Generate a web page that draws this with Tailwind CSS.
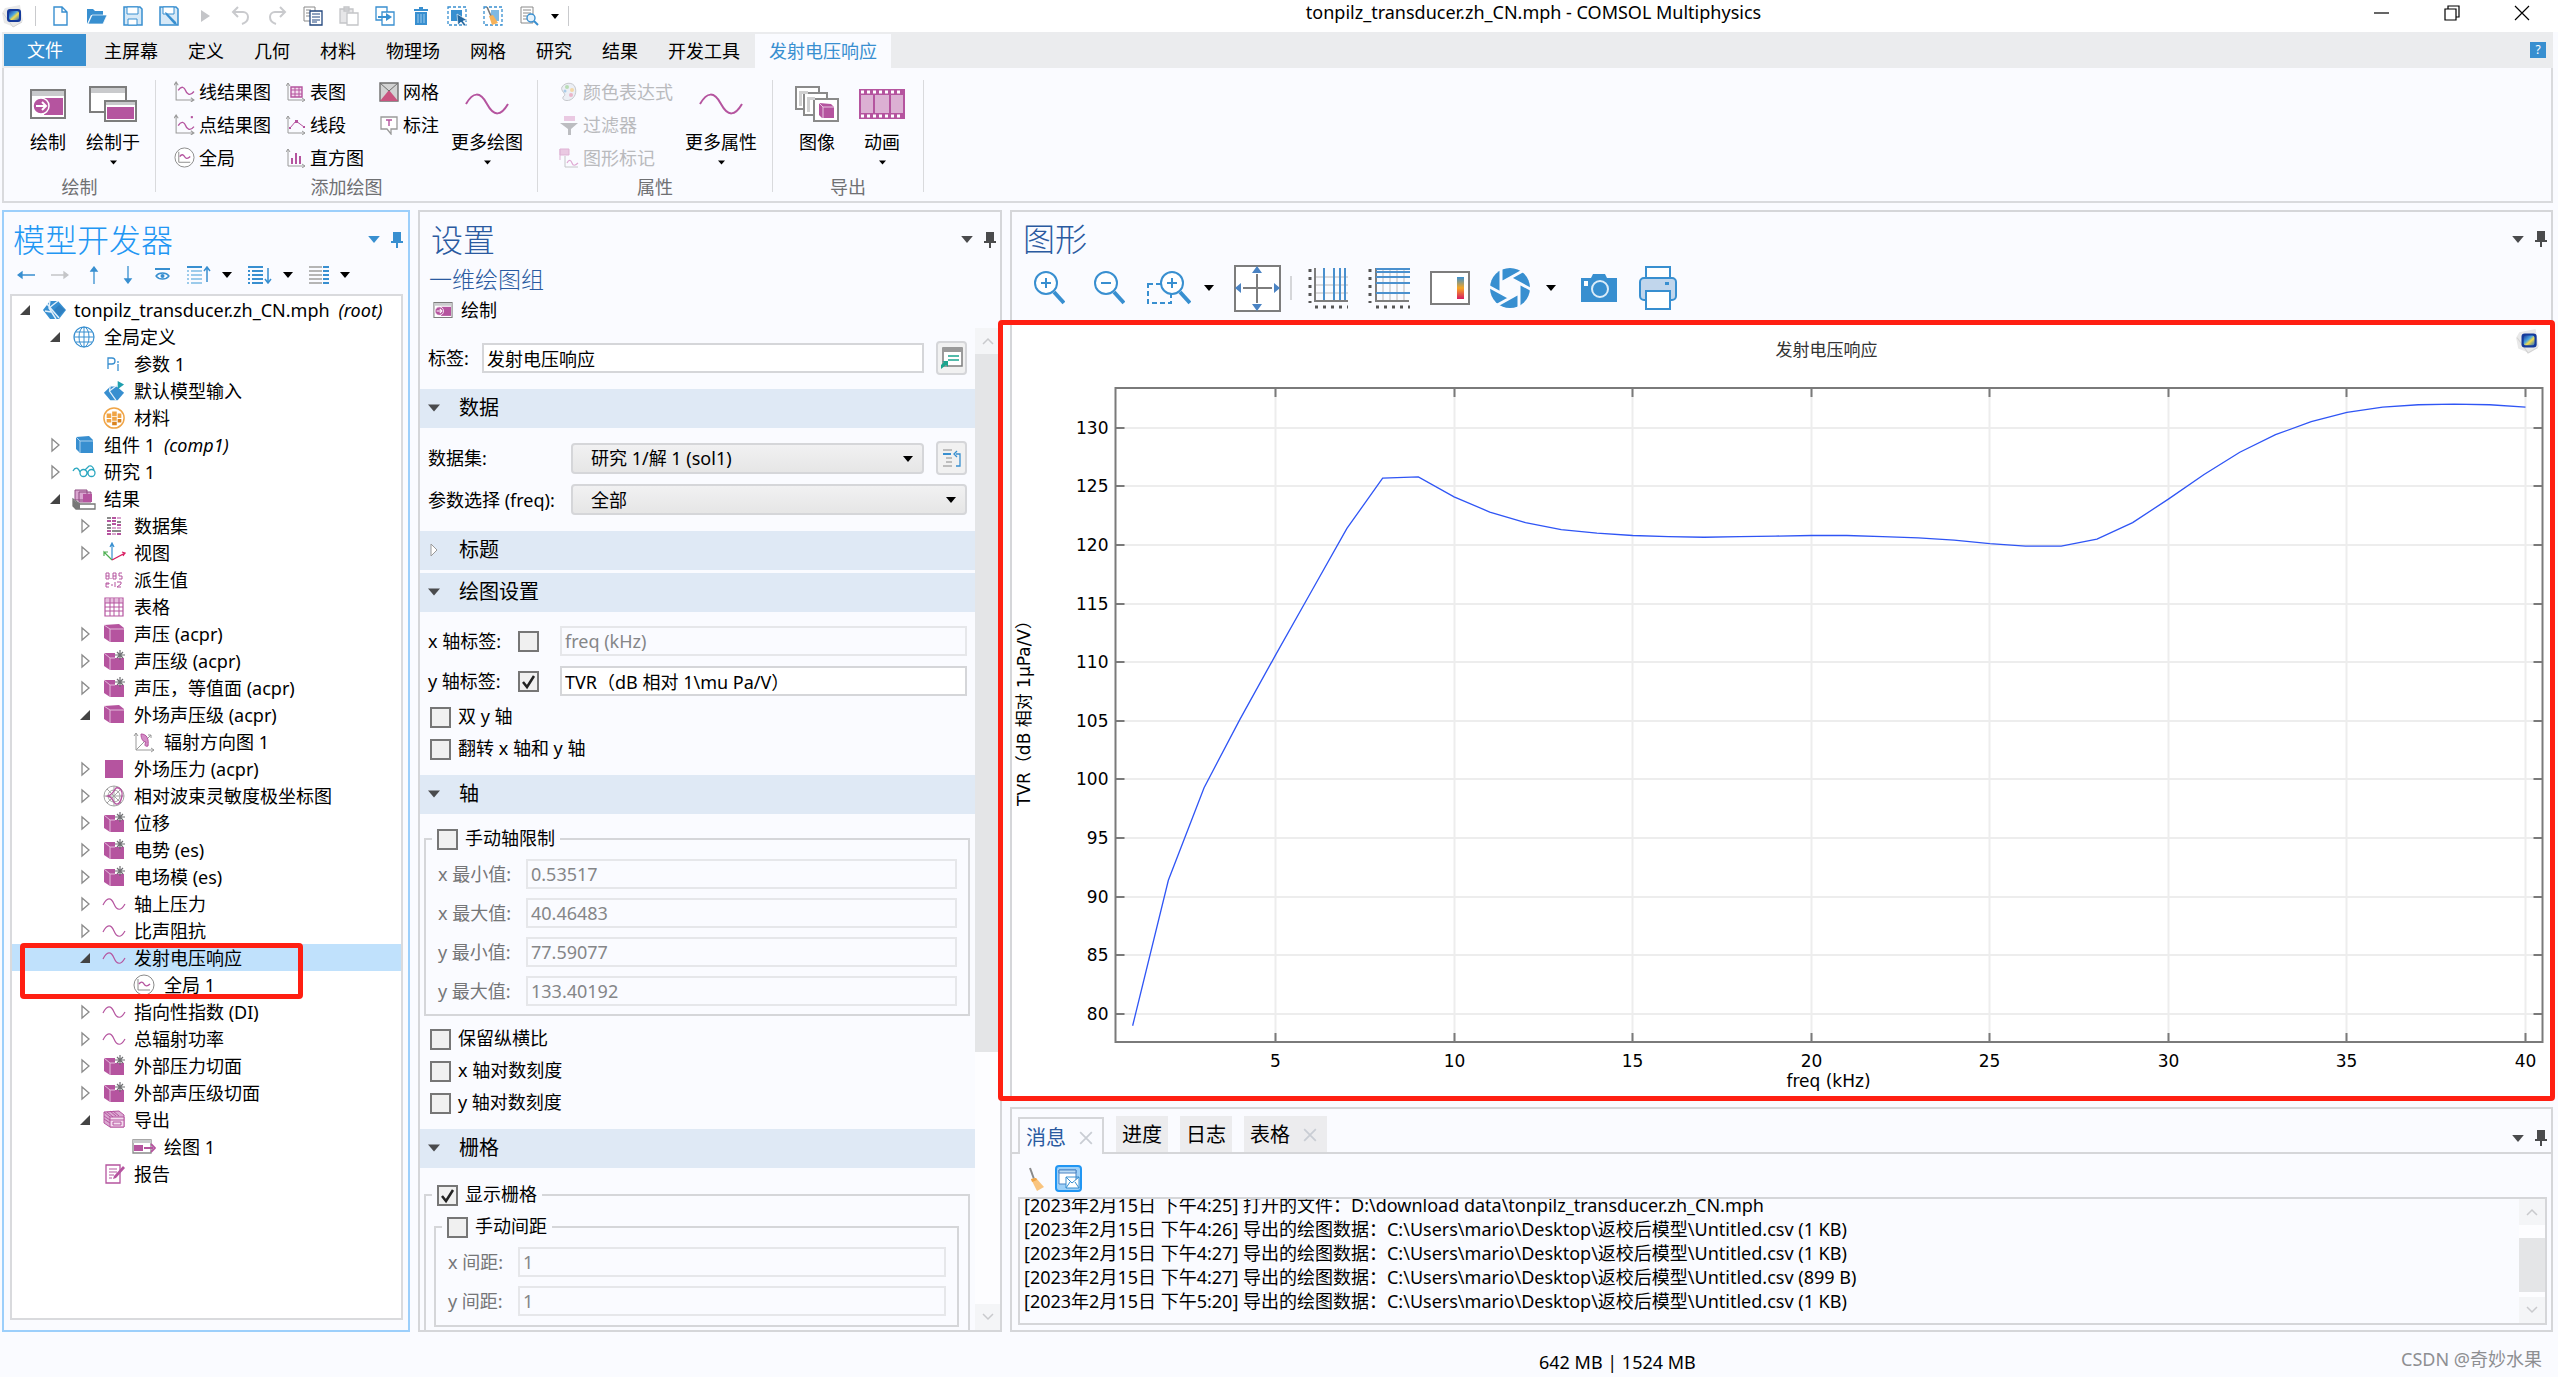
<!DOCTYPE html>
<html lang="zh-CN">
  <head>
    <meta charset="UTF-8" />
    <meta name="viewport" content="width=device-width, initial-scale=1.0" />
    <title>tonpilz_transducer.zh_CN.mph - COMSOL Multiphysics</title>
    <script src="https://cdn.jsdelivr.net/npm/@tailwindcss/browser@4"></script>
  </head>
  <body
    class="h-screen flex flex-col overflow-hidden bg-[#fafbff] text-black text-[18px] leading-6 font-['Noto_Sans','Noto_Sans_CJK_SC',sans-serif]"
  >
    <!-- Icon sprite -->
    <svg class="absolute size-0">
      <defs>
        <linearGradient id="logo-fill" x1="0" y1="0" x2="1" y2="1">
          <stop offset="0" stop-color="#1b3f9e" /><stop offset=".4" stop-color="#4aa3e0" />
          <stop offset=".6" stop-color="#f5dd4a" /><stop offset="1" stop-color="#2d6fc0" />
        </linearGradient>
        <linearGradient id="legend-fill" x1="0" y1="0" x2="0" y2="1">
          <stop offset="0" stop-color="#388fd0" /><stop offset=".5" stop-color="#f6a623" />
          <stop offset="1" stop-color="#d81b60" />
        </linearGradient>
      </defs>
      <symbol id="logo" viewBox="0 0 24 24">
        <path d="M4 4 19 1l3 16-9 6-10-4-2-10z" fill="#e9e9e9" />
        <path d="M2 9 12 23l9-5" fill="none" stroke="#d4d4d4" />
        <rect x="6" y="5" width="14" height="13" rx="3" fill="#153a9b" />
        <rect x="8" y="7" width="10" height="9" rx="2" fill="url(#logo-fill)" />
      </symbol>
      <symbol id="caret" viewBox="0 0 10 6"><path d="M0 0h10L5 6z" fill="currentColor" /></symbol>
      <symbol id="pin" viewBox="0 0 12 16"><path d="M2 0h8v9h2v2H7v5H5v-5H0V9h2z" fill="currentColor" /></symbol>
      <symbol id="file" viewBox="0 0 20 20"><path d="M3 1h8l5 5v13H3zM11 1v5h5" fill="#fff" stroke="#388fd0" stroke-width="1.4" /></symbol>
      <symbol id="open" viewBox="0 0 20 20"><path d="M0 18V3h6l2 2h8v4H4z" fill="#388fd0" /><path d="M5 9h15l-4 9H1z" fill="#388fd0" stroke="#fff" stroke-width=".7" /></symbol>
      <symbol id="save" viewBox="0 0 20 20"><path d="M1 1h16l2 2v16H1z" fill="#d7e9f7" stroke="#388fd0" stroke-width="1.5" /><path d="M4 1h11v7H4zM5 13h9v6H5z" fill="#fff" stroke="#388fd0" /></symbol>
      <symbol id="saveas" viewBox="0 0 20 20"><path d="M1 1h16l2 2v16H1z" fill="#d7e9f7" stroke="#388fd0" stroke-width="1.5" /><path d="M4 1h11v7H4z" fill="#fff" stroke="#388fd0" /><path d="m6 6 2 1 9 9 1 3-3-1-8-9z" fill="#388fd0" /></symbol>
      <symbol id="play" viewBox="0 0 20 20"><path d="M6 4v12l9-6z" fill="#c4c5c8" /></symbol>
      <symbol id="undo" viewBox="0 0 20 20"><path d="M7 1 2 6l5 5M2 6h10a5 5 0 0 1 5 5c0 4-3 6-6 7" fill="none" stroke="#c9cacd" stroke-width="2" /></symbol>
      <symbol id="redo" viewBox="0 0 20 20"><path d="m13 1 5 5-5 5M18 6H8a5 5 0 0 0-5 5c0 4 3 6 6 7" fill="none" stroke="#c9cacd" stroke-width="2" /></symbol>
      <symbol id="copy" viewBox="0 0 20 20"><path d="M1 1h11v14H1z" fill="#fff" stroke="#8a8a8a" /><path d="M3 4h5M3 7h4M3 10h4" stroke="#8a8a8a" /><path d="M7 5h12v14H7z" fill="#fff" stroke="#23477e" stroke-width="1.3" /><path d="M9 8h8M9 11h8M9 14h8M9 16h5" stroke="#23477e" /></symbol>
      <symbol id="paste" viewBox="0 0 20 20"><path d="M1 3h13v14H1zM5 1h5v4H5z" fill="#e6e6e8" stroke="#c4c5c8" stroke-width="1.3" /><path d="M8 7h11v12H8z" fill="#fff" stroke="#c4c5c8" stroke-width="1.3" /></symbol>
      <symbol id="dup" viewBox="0 0 20 20"><path d="M1 1h11v13H1z" fill="#fff" stroke="#388fd0" stroke-width="1.3" /><path d="M7 6h12v13H7z" fill="#fff" stroke="#388fd0" stroke-width="1.3" /><path d="M3 10h8V7l6 4-6 4v-3H3z" fill="#388fd0" /></symbol>
      <symbol id="trash" viewBox="0 0 20 20"><path d="M3 3h5V1h4v2h5v2H3zM4 6h12v13H4z" fill="#388fd0" /><path d="M7 8v9M10 8v9M13 8v9" stroke="#9fcdee" /></symbol>
      <symbol id="select" viewBox="0 0 20 20"><path d="M1 1h18v18H1z" fill="none" stroke="#388fd0" stroke-width="1.3" stroke-dasharray="3 2" /><path d="M4 4h11v11H4z" fill="#388fd0" /><path d="m10 8 10 6-4 1 3 4-2 1-3-4-3 3z" fill="#23679f" stroke="#fff" stroke-width=".6" /></symbol>
      <symbol id="broombox" viewBox="0 0 20 20"><path d="M1 1h18v18H1z" fill="none" stroke="#388fd0" stroke-width="1.3" stroke-dasharray="3 2" /><path d="M8 4h8v11H8z" fill="#7fb9e3" /><path d="m4 1 4 9" stroke="#777" stroke-width="1.6" /><path d="m6 10 4-1 5 8-6 2z" fill="#f6b25a" /></symbol>
      <symbol id="find" viewBox="0 0 20 20"><path d="M2 1h12v16H2z" fill="#fff" stroke="#8a8a8a" /><path d="M4 4h8M4 7h8M4 10h4M4 13h4" stroke="#8a8a8a" /><circle cx="12" cy="12" r="4" fill="#e6f2fb" stroke="#388fd0" stroke-width="1.4" /><path d="m15 15 4 4" stroke="#388fd0" stroke-width="2" /></symbol>

      <!-- Ribbon -->
      <symbol id="plot" viewBox="0 0 36 30"><path d="M1 1h34v28H1z" fill="#fff" stroke="#7d7d7d" stroke-width="2" /><path d="M2 2h32v5H2z" fill="#c9cacc" /><path d="M14 9h19v17H14z" fill="#b5549f" /><circle cx="11" cy="17" r="8" fill="#b5549f" stroke="#fff" stroke-width="1.5" /><path d="M6 17h9M12 13l4 4-4 4" fill="none" stroke="#fff" stroke-width="2" /></symbol>
      <symbol id="plotin" viewBox="0 0 48 36"><path d="M1 1h36v25H1z" fill="#fff" stroke="#7d7d7d" stroke-width="2" /><path d="M2 2h34v5H2z" fill="#c9cacc" /><path d="M16 15h31v20H16z" fill="#fff" stroke="#7d7d7d" stroke-width="2" /><path d="M17 16h29v3H17z" fill="#c9cacc" /><path d="M18 21h27v12H18z" fill="#b5549f" /></symbol>
      <symbol id="line" viewBox="0 0 20 20"><path d="M2 1v17h17M0 4l2-3 2 3M16 16l3 2-3 2" fill="none" stroke="#9a9a9a" /><path d="M4 9c3-5 6-3 7 0s4 6 8 1" fill="none" stroke="#b5549f" stroke-width="1.3" /></symbol>
      <symbol id="point" viewBox="0 0 20 20"><path d="M2 1v17h17M0 4l2-3 2 3M16 16l3 2-3 2" fill="none" stroke="#9a9a9a" /><path d="M4 11c3-5 6-3 7 0s4 6 8 1" fill="none" stroke="#b5549f" stroke-width="1.3" /><path d="M16 2h2v2h-2z" fill="#b5549f" /></symbol>
      <symbol id="global" viewBox="0 0 22 22"><circle cx="11" cy="11" r="10" fill="#fff" stroke="#8a8a8a" /><path d="M5 5v11h12" fill="none" stroke="#8a8a8a" /><path d="M6 10c2-3 4-2 5 0s3 3 6 0" fill="none" stroke="#b5549f" stroke-width="1.4" /></symbol>
      <symbol id="tplot" viewBox="0 0 20 20"><path d="M2 1v17h17M0 4l2-3 2 3M16 16l3 2-3 2" fill="none" stroke="#9a9a9a" /><path d="M5 5h11v10H5z" fill="#f3dcee" stroke="#b5549f" stroke-width="1.4" /><path d="M5 8h11M5 12h11M9 5v10M13 5v10" stroke="#b5549f" /></symbol>
      <symbol id="segs" viewBox="0 0 20 20"><path d="M2 1v17h17M0 4l2-3 2 3M16 16l3 2-3 2" fill="none" stroke="#9a9a9a" /><path d="m4 13 6-7 8 6" fill="none" stroke="#b5549f" /><path d="M3 12h2v2H3zM9 5h3v3H9zM17 11h2v2h-2z" fill="#b5549f" /></symbol>
      <symbol id="hist" viewBox="0 0 20 20"><path d="M2 1v17h17M0 4l2-3 2 3M16 16l3 2-3 2" fill="none" stroke="#9a9a9a" /><path d="M5 10h2v6H5zM9 5h2v11H9zM13 8h2v8h-2z" fill="#b5549f" /></symbol>
      <symbol id="mesh" viewBox="0 0 20 20"><path d="M1 1h18v18H1z" fill="#d2d2d2" stroke="#6e6e6e" stroke-width="1.4" /><path d="m1 19 9-11 9 11z" fill="#c9547f" /><path d="m1 1 9 8 9-8" fill="none" stroke="#6e6e6e" /></symbol>
      <symbol id="note" viewBox="0 0 20 20"><path d="M2 2h16v12h-6v5l-4-5H2z" fill="#fff" stroke="#9a9a9a" stroke-width="1.3" /><path d="M7 5h6M10 5v6" stroke="#b5549f" stroke-width="1.4" /></symbol>
      <symbol id="wave" viewBox="0 0 44 22"><path d="M1 11C8-1 15-2 22 11s14 12 21 0" fill="none" stroke="#b5549f" stroke-width="2" /></symbol>
      <symbol id="palette" viewBox="0 0 20 20"><path d="M3 5c3-5 11-5 13 0s0 11-5 13c-6 2-9-2-6-4s-4-5-2-9z" fill="#eceff5" stroke="#c6c8cc" /><circle cx="8" cy="5" r="2" fill="#b9dcb5" /><circle cx="13" cy="8" r="2" fill="#f4d8a8" /><circle cx="12" cy="13" r="2" fill="#eab5c9" /><circle cx="6" cy="9" r="1.5" fill="#a9cce8" /></symbol>
      <symbol id="filter" viewBox="0 0 20 20"><path d="M5 1h11v5H5z" fill="#eac9e2" /><path d="M1 8h18l-7 6v6H9v-6z" fill="#bcbdc1" /></symbol>
      <symbol id="marker" viewBox="0 0 20 20"><path d="M1 1h9v6H1zM1 1v11" fill="#eac9e2" stroke="#dfb3d5" /><path d="M6 8v11h13" fill="none" stroke="#c4c5c8" /><path d="M8 15c2-4 4-3 5 0s3 3 6 0" fill="none" stroke="#dfa9d3" stroke-width="1.2" /></symbol>
      <symbol id="image" viewBox="0 0 44 36"><g fill="#fff" stroke="#8a8a8a" stroke-width="2"><path d="M1 1h23v22H1z" /><path d="M9 7h23v22H9z" /><path d="M19 13h24v22H19z" /></g><path d="M4 5h9v3H7v12H4zM12 11h8v3h-5v12h-3z" fill="#d0d0d0" /><path d="m24 17 12 1 3 3v11H27l-3-3z" fill="#b5549f" /><path d="m24 17 4 4h11M28 21v11" fill="none" stroke="#e9c7e1" /></symbol>
      <symbol id="anim" viewBox="0 0 46 30"><path d="M0 0h46v30H0z" fill="#b5549f" /><path d="M2 6h12v18H2zM16 6h14v18H16zM32 6h12v18H32z" fill="#dcb0d3" /><path d="M2 3h42M2 27h42" stroke="#fff" stroke-width="3" stroke-dasharray="3 3" /></symbol>

      <!-- Tree -->
      <symbol id="root" viewBox="0 0 24 22"><path d="m1 11 7-9h8l8 9-7 9H8z" fill="#388fd0" /><path d="m8 1-1 8 7 11M7 9l9-7M3 12l6 1M5 5l12 14" fill="none" stroke="#e2f0fb" stroke-width="1.4" /><path d="m12 11 5-5 6 5-6 6z" fill="#2f7fc0" /></symbol>
      <symbol id="globe" viewBox="0 0 22 22"><circle cx="11" cy="11" r="10" fill="#fff" stroke="#388fd0" stroke-width="1.2" /><ellipse cx="11" cy="11" rx="5" ry="10" fill="none" stroke="#388fd0" /><path d="M1 11h20M11 1v20M3 6h16M3 16h16" stroke="#388fd0" fill="none" /></symbol>
      <symbol id="param" viewBox="0 0 22 22"><path d="M5 16V5h4a3 3 0 0 1 0 6H5M15 11v7M15 8v2" fill="none" stroke="#388fd0" stroke-width="1.3" /></symbol>
      <symbol id="input" viewBox="0 0 24 24"><path d="m1 14 7-7h7l8 7-7 8H8z" fill="#388fd0" /><path d="m8 6-1 6 7 10M7 12l8-6" fill="none" stroke="#e2f0fb" stroke-width="1.3" /><path d="M16 1v9l7-5z" fill="#1f9fae" /></symbol>
      <symbol id="material" viewBox="0 0 24 24"><circle cx="12" cy="12" r="11" fill="#fff" stroke="#f0a445" stroke-width="1.6" /><path d="M4 7h5v5H4zM10 5h5v5h-5zM16 7h4v5h-4zM4 13h5v4H4zM10 11h5v4h-5z" fill="#f0a445" /><path d="M10 16h5v4h-5zM16 13h4v4h-4z" fill="#d98320" /></symbol>
      <symbol id="comp" viewBox="0 0 22 22"><path d="m3 3 13-1 4 4v13H7l-4-4z" fill="#388fd0" /><path d="m3 3 4 4h13M7 7v12" fill="none" stroke="#a8d0ee" /></symbol>
      <symbol id="study" viewBox="0 0 24 22"><path d="M1 10c2-4 5-4 7 1M8 12a3.500 3.500 0 1 0 7 0 3.500 3.500 0 1 0-7 0M16 12a3.500 3.500 0 1 0 7 0 3.500 3.500 0 1 0-7 0M13 9l4-4c3-1 4 1 5 4" fill="none" stroke="#2aa7c0" stroke-width="1.3" /></symbol>
      <symbol id="results" viewBox="0 0 24 22"><path d="M3 2h12v10H3zM7 4h12v10H7z" fill="#d9a5cf" stroke="#8d4b80" /><path d="M11 6h9v8h-9z" fill="#b5549f" /><path d="M1 11v7l3 3h19v-5H8z" fill="#fff" stroke="#777" stroke-width="1.3" /><path d="M1 12v6l3 3h4v-5z" fill="#777" /></symbol>
      <symbol id="dataset" viewBox="0 0 22 22"><g stroke-width="2"><path d="M4 3h4M4 10h4M4 13h4M9 16h9M14 7h4" stroke="#8a8a8a" /><path d="M4 6h4M4 16h4M4 19h4M9 3h4M9 6h4M9 9h4M14 10h4M14 19h4" stroke="#b5549f" /><path d="M9 13h4M9 19h4M14 3h4M14 13h4" stroke="#d9a5cf" /></g></symbol>
      <symbol id="view" viewBox="0 0 24 22"><path d="M10 18V2M8 5l2-4 2 4" fill="none" stroke="#388fd0" stroke-width="1.2" /><path d="m10 18-8-8v4M2 10h4" fill="none" stroke="#4caf50" stroke-width="1.2" /><path d="m10 18 13-7-3-1M23 11l-2 3" fill="none" stroke="#d81b60" stroke-width="1.2" /></symbol>
      <symbol id="derived" viewBox="0 0 22 22"><g fill="none" stroke="#b5549f"><path d="M3 4h3v6H3zM3 7h3M8 9v1M10 4h3v6h-3zM10 7h3M19 4h-3v3h3v3h-3" /><path d="M3 15h3v-1H3v4h3M8 16h2M12 13v5M14 13h4v2l-4 3h4" /></g></symbol>
      <symbol id="table" viewBox="0 0 22 22"><path d="M2 2h18v18H2z" fill="#fff" stroke="#b5549f" stroke-width="1.2" /><path d="M3 3h16v4H3z" fill="#e6bfde" /><path d="M2 7h18M2 11h18M2 15h18M7 2v18M11 2v18M16 2v18" stroke="#b5549f" /></symbol>
      <symbol id="cube" viewBox="0 0 22 22"><path d="m1 2 15-1 5 4v14H7l-6-4z" fill="#b5549f" /><path d="m1 2 6 4h14M7 6v13" fill="none" stroke="#e3bbdb" /></symbol>
      <symbol id="cubestar" viewBox="0 0 22 22"><path d="M1 3h11v5h9v12H7l-6-4z" fill="#b5549f" /><path d="m1 3 6 5h5M7 8v12" fill="none" stroke="#e3bbdb" /><path d="M17 0v10M12 5h10M14 2l6 6M20 2l-6 6" stroke="#6f7073" stroke-width="1.2" /></symbol>
      <symbol id="radiation" viewBox="0 0 22 22"><path d="M3 2v17h18M1 5l2-3 2 3M18 17l3 2-3 2M3 19 18 4M15 4h3v3" fill="none" stroke="#9a9a9a" /><path d="M8 3c6 0 8 5 7 12-3 1-4-1-2-4-3 0-5-3-5-8z" fill="#d48cc6" stroke="#b5549f" /></symbol>
      <symbol id="square" viewBox="0 0 22 22"><path d="M2 2h18v18H2z" fill="#b5549f" /></symbol>
      <symbol id="polar" viewBox="0 0 22 22"><g fill="none" stroke="#a3a3a3"><circle cx="11" cy="11" r="10" /><circle cx="11" cy="11" r="6" /><path d="M1 11h20M11 1v20M4 4l14 14M18 4 4 18" /></g><path d="M5 11c3-1 5-3 8-8 4-1 7 3 6 8s-3 9-6 8-3-7-8-8z" fill="none" stroke="#b5549f" stroke-width="1.4" /></symbol>
      <symbol id="curve" viewBox="0 0 24 22"><path d="M1 12C5 4 9 4 12 11s7 7 11 0" fill="none" stroke="#b5549f" stroke-width="1.2" /></symbol>
      <symbol id="export" viewBox="0 0 22 22"><path d="m1 3 15-1 5 4v12H7l-6-4z" fill="#dba9d1" stroke="#b5549f" /><path d="M7 8h14v10H7z" fill="#f3dcee" stroke="#b5549f" /><path d="M7 11h14M1 3l6 5M4 3l6 5M7 2l6 5M10 2l6 5M10 13h8v3h-8zM1 7l6 4M1 10l6 4" fill="none" stroke="#b5549f" /></symbol>
      <symbol id="plotout" viewBox="0 0 24 22"><path d="M1 4h18v13H1z" fill="#fff" stroke="#8a8a8a" stroke-width="1.3" /><path d="M1 4h18v3H1z" fill="#c9cacc" /><path d="M2 9h9v6H2z" fill="#b5549f" /><path d="M12 12h9M19 8l4 4-4 4" fill="none" stroke="#b5549f" stroke-width="1.8" /></symbol>
      <symbol id="report" viewBox="0 0 22 22"><path d="M3 2h14v18H3z" fill="#fff" stroke="#b5549f" stroke-width="1.3" /><path d="M6 6h8M6 9h8M6 12h5M6 15h3" stroke="#b5549f" /><path d="m20 3 2 2-9 10-3 1 1-3z" fill="#b5549f" /></symbol>
    </svg>

    <!-- Title bar -->
    <header class="flex items-center h-8 shrink-0 bg-white">
      <svg class="size-6 ml-px"><use href="#logo" /></svg>
      <span class="w-px h-5 mx-[10px] bg-[#c9cacd]"></span>
      <div class="flex items-center gap-4 ml-[5px]">
        <button aria-label="新建"><svg class="size-5"><use href="#file" /></svg></button>
        <button aria-label="打开"><svg class="size-5"><use href="#open" /></svg></button>
        <button aria-label="保存"><svg class="size-5"><use href="#save" /></svg></button>
        <button aria-label="另存为"><svg class="size-5"><use href="#saveas" /></svg></button>
        <button aria-label="运行"><svg class="size-5"><use href="#play" /></svg></button>
        <button aria-label="撤消"><svg class="size-5"><use href="#undo" /></svg></button>
        <button aria-label="重做"><svg class="size-5"><use href="#redo" /></svg></button>
        <button aria-label="复制"><svg class="size-5"><use href="#copy" /></svg></button>
        <button aria-label="粘贴"><svg class="size-5"><use href="#paste" /></svg></button>
        <button aria-label="生成副本"><svg class="size-5"><use href="#dup" /></svg></button>
        <button aria-label="删除"><svg class="size-5"><use href="#trash" /></svg></button>
        <button aria-label="选择"><svg class="size-5"><use href="#select" /></svg></button>
        <button aria-label="清除选择"><svg class="size-5"><use href="#broombox" /></svg></button>
        <button aria-label="查找"><svg class="size-5"><use href="#find" /></svg></button>
      </div>
      <button class="ml-3" aria-label="更多"><svg class="w-2 h-[5px]"><use href="#caret" /></svg></button>
      <span class="w-px h-5 ml-[9px] bg-[#c9cacd]"></span>
      <h1 class="flex-1 pl-[124px] pb-2 text-center">tonpilz_transducer.zh_CN.mph - COMSOL Multiphysics</h1>
      <div class="flex items-center gap-[54px] pr-7 pb-[6px]">
        <button aria-label="最小化"><svg class="size-4" viewBox="0 0 16 16"><path d="M0 8h15" stroke="#000" stroke-width="1.2" /></svg></button>
        <button aria-label="还原"><svg class="size-4" viewBox="0 0 16 16"><path d="M1 4h11v11H1zM4 4V1h11v11h-3" fill="none" stroke="#000" stroke-width="1.2" /></svg></button>
        <button aria-label="关闭"><svg class="size-4" viewBox="0 0 16 16"><path d="m1 1 14 14M15 1 1 15" stroke="#000" stroke-width="1.2" /></svg></button>
      </div>
    </header>

    <!-- Menu tabs -->
    <nav class="flex items-center h-9 shrink-0 ml-[2px] mr-[5px] pl-[2px] bg-[#ebecee]">
      <button class="w-[82px] h-8 mr-[3px] bg-[#388fd0] text-white">文件</button>
      <button class="px-[15px] pt-[2px]">主屏幕</button>
      <button class="px-[15px] pt-[2px]">定义</button>
      <button class="px-[15px] pt-[2px]">几何</button>
      <button class="px-[15px] pt-[2px]">材料</button>
      <button class="px-[15px] pt-[2px]">物理场</button>
      <button class="px-[15px] pt-[2px]">网格</button>
      <button class="px-[15px] pt-[2px]">研究</button>
      <button class="px-[15px] pt-[2px]">结果</button>
      <button class="px-[15px] pt-[2px]">开发工具</button>
      <button class="h-[34px] self-end px-[14px] bg-[#fafbff] text-[#388fd0]">发射电压响应</button>
      <button class="ml-auto mr-[7px] size-4 bg-[#388fd0] text-white text-xs leading-4" aria-label="帮助">?</button>
    </nav>

    <!-- Ribbon -->
    <section class="flex h-[135px] shrink-0 ml-[2px] mr-[5px] pb-[2px] border-2 border-t-0 border-[#d9dadd]">
      <div class="w-[151px] flex flex-col">
        <div class="flex flex-1 gap-5 pt-[18px] pl-[26px]">
          <button class="flex flex-col items-center justify-start"><svg class="w-9 h-9"><use href="#plot" /></svg><span class="mt-2">绘制</span></button>
          <button class="flex flex-col items-center justify-start"><svg class="w-12 h-9"><use href="#plotin" /></svg><span class="mt-2">绘制于</span><svg class="w-[7px] h-[5px] mt-[6px]"><use href="#caret" /></svg></button>
        </div>
        <div class="text-center text-[#6f7073]">绘制</div>
      </div>
      <div class="w-px h-28 mt-3 bg-[#d9dadd]"></div>
      <div class="w-[381px] flex flex-col">
        <div class="flex flex-1 pl-[18px]">
          <div class="grid grid-cols-[112px_93px_72px] auto-rows-[33px] pt-[7px]">
            <button class="flex items-center gap-1"><svg class="size-[21px]"><use href="#line" /></svg>线结果图</button>
            <button class="flex items-center gap-1"><svg class="size-5"><use href="#tplot" /></svg>表图</button>
            <button class="flex items-center gap-1"><svg class="size-5"><use href="#mesh" /></svg>网格</button>
            <button class="flex items-center gap-1"><svg class="size-[21px]"><use href="#point" /></svg>点结果图</button>
            <button class="flex items-center gap-1"><svg class="size-5"><use href="#segs" /></svg>线段</button>
            <button class="flex items-center gap-1"><svg class="size-5"><use href="#note" /></svg>标注</button>
            <button class="flex items-center gap-1"><svg class="size-[21px]"><use href="#global" /></svg>全局</button>
            <button class="flex items-center gap-1"><svg class="size-5"><use href="#hist" /></svg>直方图</button>
          </div>
          <button class="flex flex-col items-center justify-start pt-[18px]"><svg class="w-11 h-9"><use href="#wave" /></svg><span class="mt-2">更多绘图</span><svg class="w-[7px] h-[5px] mt-[6px]"><use href="#caret" /></svg></button>
        </div>
        <div class="text-center text-[#6f7073]">添加绘图</div>
      </div>
      <div class="w-px h-28 mt-3 bg-[#d9dadd]"></div>
      <div class="w-[234px] flex flex-col">
        <div class="flex flex-1 pl-[21px]">
          <div class="grid grid-cols-[126px] auto-rows-[33px] pt-[7px] text-[#b9babd]">
            <button class="flex items-center gap-1" disabled><svg class="size-5"><use href="#palette" /></svg>颜色表达式</button>
            <button class="flex items-center gap-1" disabled><svg class="size-5"><use href="#filter" /></svg>过滤器</button>
            <button class="flex items-center gap-1" disabled><svg class="size-5"><use href="#marker" /></svg>图形标记</button>
          </div>
          <button class="flex flex-col items-center justify-start pt-[18px]"><svg class="w-11 h-9"><use href="#wave" /></svg><span class="mt-2">更多属性</span><svg class="w-[7px] h-[5px] mt-[6px]"><use href="#caret" /></svg></button>
        </div>
        <div class="text-center text-[#6f7073]">属性</div>
      </div>
      <div class="w-px h-28 mt-3 bg-[#d9dadd]"></div>
      <div class="w-[150px] flex flex-col">
        <div class="flex flex-1 gap-5 pt-[18px] pl-[22px]">
          <button class="flex flex-col items-center justify-start"><svg class="w-11 h-9"><use href="#image" /></svg><span class="mt-2">图像</span></button>
          <button class="flex flex-col items-center justify-start"><svg class="w-[46px] h-9"><use href="#anim" /></svg><span class="mt-2">动画</span><svg class="w-[7px] h-[5px] mt-[6px]"><use href="#caret" /></svg></button>
        </div>
        <div class="text-center text-[#6f7073]">导出</div>
      </div>
      <div class="w-px h-28 mt-3 bg-[#d9dadd]"></div>
    </section>

    <main class="flex flex-1 min-h-0 gap-2 mt-[7px] ml-[2px] mr-[5px]">
      <!-- Model builder -->
      <section class="w-[408px] shrink-0 flex flex-col pl-[6px] pr-[5px] pb-[10px] border-2 border-[#9ccffb]">
        <div class="flex items-center h-[55px] shrink-0 pl-[3px] text-[#388fd0]">
          <h2 class="flex-1 text-[32px] font-light text-[#2196f3]">模型开发器</h2>
          <button class="mr-[11px]" aria-label="菜单"><svg class="w-3 h-[7px]"><use href="#caret" /></svg></button>
          <button aria-label="固定"><svg class="w-3 h-4"><use href="#pin" /></svg></button>
        </div>
        <div class="flex items-center gap-4 h-4 shrink-0 mb-[11px] pl-[7px]">
          <button aria-label="后退"><svg class="size-[18px]" viewBox="0 0 18 18"><path d="M18 9H2M5 6 1 9l4 3z" fill="#388fd0" stroke="#388fd0" stroke-width="1.3" /></svg></button>
          <button aria-label="前进"><svg class="size-[18px]" viewBox="0 0 18 18"><path d="M0 9h16M13 6l4 3-4 3z" fill="#c4c5c8" stroke="#c4c5c8" stroke-width="1.3" /></svg></button>
          <button aria-label="上移"><svg class="size-[18px]" viewBox="0 0 18 18"><path d="M9 18V2M6 5l3-4 3 4z" fill="#388fd0" stroke="#388fd0" stroke-width="1.3" /></svg></button>
          <button aria-label="下移"><svg class="size-[18px]" viewBox="0 0 18 18"><path d="M9 0v16M6 13l3 4 3-4z" fill="#388fd0" stroke="#388fd0" stroke-width="1.3" /></svg></button>
          <button aria-label="显示"><svg class="size-[18px]" viewBox="0 0 18 18"><path d="M2 3h15" stroke="#388fd0" stroke-width="2" /><path d="M3 10c3-4 10-4 13 0-3 4-10 4-13 0z" fill="none" stroke="#388fd0" stroke-width="1.3" /><circle cx="9.500" cy="10" r="2" fill="#388fd0" /></svg></button>
          <button class="flex items-center gap-[11px]" aria-label="全部折叠"><svg class="w-6 h-[18px]" viewBox="0 0 24 18"><path d="M0 1h15" stroke="#388fd0" stroke-width="2" /><path d="M0 5h2M4 5h11M0 9h2M4 9h11M0 13h2M4 13h11M0 17h2M4 17h11" stroke="#9ccbeb" stroke-width="2" /><path d="M20 16V1M17 5l3-4 3 4" fill="none" stroke="#388fd0" stroke-width="1.500" /></svg><svg class="w-[10px] h-[6px]"><use href="#caret" /></svg></button>
          <button class="flex items-center gap-[11px]" aria-label="全部展开"><svg class="w-6 h-[18px]" viewBox="0 0 24 18"><path d="M0 1h15M0 5h2M4 5h11M0 9h2M4 9h11M0 13h2M4 13h11M0 17h2M4 17h11" stroke="#388fd0" stroke-width="2" /><path d="M20 2v15M17 13l3 4 3-4" fill="none" stroke="#388fd0" stroke-width="1.500" /></svg><svg class="w-[10px] h-[6px]"><use href="#caret" /></svg></button>
          <button class="flex items-center gap-[11px]" aria-label="列"><svg class="w-5 h-[18px]" viewBox="0 0 20 18"><path d="M0 1h13M0 5h13M0 9h13M0 13h13M0 17h13" stroke="#b5b5b5" stroke-width="2" /><path d="M14 1h6M14 5h6M14 9h6M14 13h6M14 17h6" stroke="#388fd0" stroke-width="2" /></svg><svg class="w-[10px] h-[6px]"><use href="#caret" /></svg></button>
        </div>
        <div class="relative flex-1 min-h-0 border-2 border-[#d9dadd] bg-white">
          <ul id="tree"></ul>
          <!-- highlight around the voltage response node -->
          <div class="absolute left-2 top-[647px] w-[283px] h-14 border-[5px] border-[#ff1f12] rounded pointer-events-none"></div>
        </div>
      </section>

      <!-- Settings -->
      <section class="w-[584px] shrink-0 flex flex-col border-2 border-[#d5d6d9]">
        <div class="flex items-center h-[55px] shrink-0 pl-[11px] text-[#4a4b4d]">
          <h2 class="flex-1 text-[32px] font-light text-[#2a5aa0]">设置</h2>
          <button class="mr-[11px]" aria-label="菜单"><svg class="w-3 h-[7px]"><use href="#caret" /></svg></button>
          <button class="mr-1" aria-label="固定"><svg class="w-3 h-4"><use href="#pin" /></svg></button>
        </div>
        <h3 class="h-6 shrink-0 pl-[9px] text-[23px] font-light text-[#2a5aa0]">一维绘图组</h3>
        <div class="flex items-center h-[37px] shrink-0 pl-[13px]">
          <button class="flex items-center gap-2"><svg class="w-5 h-4"><use href="#plot" /></svg>绘制</button>
        </div>
        <div class="flex flex-1 min-h-0">
          <form class="flex-1 min-w-0 overflow-hidden">
            <div class="flex items-center h-[34px] mt-[13px] mb-[14px] pl-2 pr-2">
              <label for="name" class="w-[54px]">标签:</label>
              <input id="name" value="发射电压响应" class="flex-1 min-w-0 h-[30px] px-[3px] border-2 border-[#d5d6d9] bg-white" />
              <button type="button" aria-label="重命名" class="grid place-items-center w-[31px] h-[34px] ml-3 rounded border-2 border-[#d5d6d9] bg-[#f1f1f1]">
                <svg class="w-6 h-6" viewBox="0 0 24 24"><path d="M3 2h19v18H3z" fill="#fff" stroke="#7d7d7d" stroke-width="1.500" /><path d="M3 2h19v4H3z" fill="#9a9a9a" /><path d="M8 10h11M8 14h11" stroke="#1ba58e" stroke-width="1.500" /><path d="M1 23v-4l3-3-2-1h6v6l-2-2z" fill="#1ba58e" /></svg>
              </button>
            </div>

            <button type="button" class="flex items-center w-full h-[39px] pl-2 pb-[2px] text-[20px] bg-[#dfe9f5]"><svg class="w-3 h-2 mr-[19px] text-[#4a4b4d]"><use href="#caret" /></svg>数据</button>
            <div class="flex flex-col gap-[9px] pt-[13px] pb-4 pl-2 pr-2">
              <div class="flex items-center h-[34px]">
                <label for="dataset-select" class="w-[143px]">数据集:</label>
                <div class="relative flex-1">
                  <select id="dataset-select" class="block appearance-none w-full h-[31px] pl-[18px] rounded border-2 border-[#d5d6d9] bg-linear-to-b from-[#f1f1f2] to-[#e6e6e6]"><option>研究 1/解 1 (sol1)</option></select>
                  <svg class="absolute right-[11px] top-[13px] w-[10px] h-[6px] pointer-events-none"><use href="#caret" /></svg>
                </div>
                <button type="button" aria-label="转到源" class="grid place-items-center w-[31px] h-[34px] ml-3 rounded border-2 border-[#d5d6d9] bg-[#f1f1f1]">
                  <svg class="w-5 h-5" viewBox="0 0 20 20"><path d="M1 2h9M4 10h6M4 14h6M1 18h9" stroke="#8a8a8a" /><path d="M1 6h8" stroke="#388fd0" stroke-width="2" /><path d="M14 18h4V6h-4M15 3l-3 3 3 3" fill="none" stroke="#388fd0" stroke-width="1.300" /></svg>
                </button>
              </div>
              <div class="flex items-center">
                <label for="param-select" class="w-[143px]">参数选择 (freq):</label>
                <div class="relative flex-1">
                  <select id="param-select" class="block appearance-none w-full h-[31px] pl-[18px] rounded border-2 border-[#d5d6d9] bg-linear-to-b from-[#f1f1f2] to-[#e6e6e6]"><option>全部</option></select>
                  <svg class="absolute right-[11px] top-[13px] w-[10px] h-[6px] pointer-events-none"><use href="#caret" /></svg>
                </div>
              </div>
            </div>

            <button type="button" class="flex items-center w-full h-[39px] mb-[3px] pl-[10px] pb-[2px] text-[20px] bg-[#dfe9f5]"><svg class="w-2 h-[14px] mr-[21px]" viewBox="0 0 8 14"><path d="M1 1v12l6-6z" fill="#fff" stroke="#9a9a9a" /></svg>标题</button>
            <button type="button" class="flex items-center w-full h-[39px] pl-2 pb-[2px] text-[20px] bg-[#dfe9f5]"><svg class="w-3 h-2 mr-[19px] text-[#4a4b4d]"><use href="#caret" /></svg>绘图设置</button>
            <div class="flex flex-col gap-[10px] pt-[14px] pb-[15px] pl-2 pr-2">
              <div class="flex items-center">
                <label for="xlab-on" class="w-[90px]">x 轴标签:</label>
                <input id="xlab-on" type="checkbox" class="appearance-none w-[21px] h-[21px] mr-[21px] border-2 border-[#767676] bg-[#f0f0f0]" />
                <input aria-label="x 轴标签" disabled value="freq (kHz)" class="flex-1 min-w-0 h-[30px] px-[3px] border-2 border-[#e6e7ea] text-[#858688]" />
              </div>
              <div class="flex items-center">
                <label for="ylab-on" class="w-[90px]">y 轴标签:</label>
                <span class="grid mr-[21px]">
                  <input id="ylab-on" type="checkbox" checked class="col-start-1 row-start-1 appearance-none w-[21px] h-[21px] border-2 border-[#767676] bg-[#f0f0f0]" />
                  <svg class="col-start-1 row-start-1 w-[21px] h-[21px] pointer-events-none" viewBox="0 0 21 21"><path d="m5 11 4 5 7-11" fill="none" stroke="#222" stroke-width="2.500" /></svg>
                </span>
                <input aria-label="y 轴标签" value="TVR（dB 相对 1\mu Pa/V）" class="flex-1 min-w-0 h-[30px] px-[3px] border-2 border-[#d5d6d9] bg-white" />
              </div>
              <label class="flex items-center gap-[7px] h-[22px] pl-[2px]"><input type="checkbox" class="appearance-none w-[21px] h-[21px] border-2 border-[#767676] bg-[#f0f0f0]" /><span class="pb-[2px]">双 y 轴</span></label>
              <label class="flex items-center gap-[7px] h-[22px] pl-[2px]"><input type="checkbox" class="appearance-none w-[21px] h-[21px] border-2 border-[#767676] bg-[#f0f0f0]" /><span class="pb-[2px]">翻转 x 轴和 y 轴</span></label>
            </div>

            <button type="button" class="flex items-center w-full h-[39px] mb-[14px] pl-2 pb-[2px] text-[20px] bg-[#dfe9f5]"><svg class="w-3 h-2 mr-[19px] text-[#4a4b4d]"><use href="#caret" /></svg>轴</button>
            <fieldset class="ml-1 mr-[5px] pl-3 pr-[11px] pb-2 border-2 border-[#d5d6d9]">
              <legend class="-ml-[6px] px-[5px] mb-[9px]">
                <label class="flex items-center gap-[7px] h-[22px]"><input type="checkbox" class="appearance-none w-[21px] h-[21px] border-2 border-[#767676] bg-[#f0f0f0]" /><span class="pb-[2px]">手动轴限制</span></label>
              </legend>
              <div class="grid grid-cols-[88px_1fr] gap-y-[9px] items-center text-[#757678]">
                <label for="xmin">x 最小值:</label><input id="xmin" disabled value="0.53517" class="min-w-0 h-[30px] px-[3px] border-2 border-[#e6e7ea] text-[#858688]" />
                <label for="xmax">x 最大值:</label><input id="xmax" disabled value="40.46483" class="min-w-0 h-[30px] px-[3px] border-2 border-[#e6e7ea] text-[#858688]" />
                <label for="ymin">y 最小值:</label><input id="ymin" disabled value="77.59077" class="min-w-0 h-[30px] px-[3px] border-2 border-[#e6e7ea] text-[#858688]" />
                <label for="ymax">y 最大值:</label><input id="ymax" disabled value="133.40192" class="min-w-0 h-[30px] px-[3px] border-2 border-[#e6e7ea] text-[#858688]" />
              </div>
            </fieldset>
            <div class="flex flex-col gap-[10px] pt-3 pb-[15px] pl-[10px]">
              <label class="flex items-center gap-[7px] h-[22px]"><input type="checkbox" class="appearance-none w-[21px] h-[21px] border-2 border-[#767676] bg-[#f0f0f0]" /><span class="pb-[2px]">保留纵横比</span></label>
              <label class="flex items-center gap-[7px] h-[22px]"><input type="checkbox" class="appearance-none w-[21px] h-[21px] border-2 border-[#767676] bg-[#f0f0f0]" /><span class="pb-[2px]">x 轴对数刻度</span></label>
              <label class="flex items-center gap-[7px] h-[22px]"><input type="checkbox" class="appearance-none w-[21px] h-[21px] border-2 border-[#767676] bg-[#f0f0f0]" /><span class="pb-[2px]">y 轴对数刻度</span></label>
            </div>

            <button type="button" class="flex items-center w-full h-[39px] mb-4 pl-2 pb-[2px] text-[20px] bg-[#dfe9f5]"><svg class="w-3 h-2 mr-[19px] text-[#4a4b4d]"><use href="#caret" /></svg>栅格</button>
            <fieldset class="ml-1 mr-[5px] pl-2 pr-[9px] pb-10 border-2 border-[#d5d6d9]">
              <legend class="-ml-[2px] px-[5px] mb-[10px]">
                <label class="flex items-center gap-[7px] h-[22px]">
                  <span class="grid">
                    <input type="checkbox" checked class="col-start-1 row-start-1 appearance-none w-[21px] h-[21px] border-2 border-[#767676] bg-[#f0f0f0]" />
                    <svg class="col-start-1 row-start-1 w-[21px] h-[21px] pointer-events-none" viewBox="0 0 21 21"><path d="m5 11 4 5 7-11" fill="none" stroke="#222" stroke-width="2.500" /></svg>
                  </span><span class="pb-[2px]">显示栅格</span></label>
              </legend>
              <fieldset class="pl-3 pr-[11px] pb-[9px] border-2 border-[#d5d6d9]">
                <legend class="-ml-[6px] px-[5px] mb-[9px]">
                  <label class="flex items-center gap-[7px] h-[22px]"><input type="checkbox" class="appearance-none w-[21px] h-[21px] border-2 border-[#767676] bg-[#f0f0f0]" /><span class="pb-[2px]">手动间距</span></label>
                </legend>
                <div class="grid grid-cols-[70px_1fr] gap-y-[9px] items-center text-[#757678]">
                  <label for="xstep">x 间距:</label><input id="xstep" disabled value="1" class="min-w-0 h-[30px] px-[3px] border-2 border-[#e6e7ea] text-[#858688]" />
                  <label for="ystep">y 间距:</label><input id="ystep" disabled value="1" class="min-w-0 h-[30px] px-[3px] border-2 border-[#e6e7ea] text-[#858688]" />
                </div>
              </fieldset>
            </fieldset>
          </form>
          <!-- scroll bar -->
          <div class="flex flex-col w-[25px] shrink-0 bg-[#fdfdff]">
            <div class="grid place-items-center h-[26px] bg-[#f4f5f7]"><svg class="w-3 h-2" viewBox="0 0 12 8"><path d="m1 7 5-5 5 5" fill="none" stroke="#c9cacd" stroke-width="1.500" /></svg></div>
            <div class="h-[698px] bg-[#e4e5e7]"></div>
            <div class="grid place-items-center h-[26px] mt-auto bg-[#f4f5f7]"><svg class="w-3 h-2" viewBox="0 0 12 8"><path d="m1 1 5 5 5-5" fill="none" stroke="#c9cacd" stroke-width="1.500" /></svg></div>
          </div>
        </div>
      </section>

      <div class="flex flex-col flex-1 min-w-0 gap-2">
        <!-- Graphics -->
        <section class="relative flex flex-col flex-1 min-h-0 border-2 border-[#d5d6d9]">
          <div class="flex items-center h-[52px] shrink-0 pl-[11px] pt-[2px] text-[#4a4b4d]">
            <h2 class="flex-1 text-[32px] font-light text-[#2a5aa0]">图形</h2>
            <button class="mr-[11px]" aria-label="菜单"><svg class="w-3 h-[7px]"><use href="#caret" /></svg></button>
            <button class="mr-1" aria-label="固定"><svg class="w-3 h-4"><use href="#pin" /></svg></button>
          </div>
          <div class="flex items-center h-12 shrink-0 mb-[11px] pl-[21px]">
            <button aria-label="放大"><svg class="w-8 h-[34px]" viewBox="0 0 32 34"><circle cx="13" cy="12" r="11" fill="#fff" stroke="#388fd0" stroke-width="2" /><path d="M8 12h10M13 7v10" stroke="#388fd0" stroke-width="2" /><path d="m21 21 10 11" stroke="#388fd0" stroke-width="4" /></svg></button>
            <button class="ml-7" aria-label="缩小"><svg class="w-8 h-[34px]" viewBox="0 0 32 34"><circle cx="13" cy="12" r="11" fill="#fff" stroke="#388fd0" stroke-width="2" /><path d="M8 12h10" stroke="#388fd0" stroke-width="2" /><path d="m21 21 10 11" stroke="#388fd0" stroke-width="4" /></svg></button>
            <button class="ml-[22px]" aria-label="缩放框"><svg class="w-11 h-[34px]" viewBox="0 0 44 34"><path d="M1 13h23v19H1z" fill="none" stroke="#388fd0" stroke-width="2" stroke-dasharray="5 3" /><circle cx="25" cy="12" r="11" fill="#fff" stroke="#388fd0" stroke-width="2" /><path d="M20 12h10M25 7v10" stroke="#388fd0" stroke-width="2" /><path d="m33 21 10 11" stroke="#388fd0" stroke-width="4" /></svg></button>
            <button class="ml-[13px]" aria-label="缩放选项"><svg class="w-[10px] h-[6px]"><use href="#caret" /></svg></button>
            <button class="ml-5" aria-label="缩放到窗口大小"><svg class="w-[47px] h-[47px]" viewBox="0 0 47 47"><path d="M1 1h45v45H1z" fill="#fff" stroke="#7d7d7d" stroke-width="2" /><path d="M9 23h29M23 9v29" stroke="#7d7d7d" stroke-width="2" /><path d="m23 1 5 7H18zM23 46l5-7H18zM1 23l6-5v10zM46 23l-6-5v10z" fill="#4a83c3" /></svg></button>
            <span class="w-[2px] h-6 mx-[9px] bg-[#d5d6d9]"></span>
            <button class="ml-[7px]" aria-label="x 轴对数刻度"><svg class="w-10 h-[42px]" viewBox="0 0 40 42"><path d="M7 10h33M7 18h33M7 26h33" stroke="#d9d9dc" stroke-width="2" /><path d="M7 1v33h33" fill="none" stroke="#7d7d7d" stroke-width="2" /><path d="M16 1v32M26 1v32M32 1v32M37 1v32" stroke="#4a90ce" stroke-width="2" /><path d="M2 2v34M7 40h33" stroke="#555" stroke-width="3" stroke-dasharray="3 5" /></svg></button>
            <button class="ml-5" aria-label="y 轴对数刻度"><svg class="w-[42px] h-[42px]" viewBox="0 0 42 42"><path d="M15 1v32M22 1v32M29 1v32M36 1v32" stroke="#d9d9dc" stroke-width="2" /><path d="M8 1v33h33" fill="none" stroke="#7d7d7d" stroke-width="2" /><path d="M8 2h34M8 5h34M8 10h34M8 16h34M8 26h34" stroke="#4a90ce" stroke-width="2" /><path d="M2 2v34M8 40h34" stroke="#555" stroke-width="3" stroke-dasharray="3 5" /></svg></button>
            <button class="ml-5" aria-label="显示图例"><svg class="w-10 h-[34px]" viewBox="0 0 40 34"><path d="M1 1h38v32H1z" fill="#fff" stroke="#7d7d7d" stroke-width="2" /><path d="M27 6h7v22h-7z" fill="url(#legend-fill)" /></svg></button>
            <button class="ml-5" aria-label="图像快照"><svg class="w-10 h-10" viewBox="0 0 40 40"><circle cx="20" cy="20" r="20" fill="#388fd0" /><path d="m20 10 9 5v10l-9 5-9-5V15z" fill="#fafbff" /><path d="m11 15 27-15M20 10l22 12M29 15v27M29 25 2 40M20 30-2 18M11 25V-2" stroke="#fafbff" stroke-width="3" /></svg></button>
            <button class="ml-4" aria-label="快照选项"><svg class="w-[10px] h-[6px]"><use href="#caret" /></svg></button>
            <button class="ml-[25px]" aria-label="相机"><svg class="w-9 h-[30px]" viewBox="0 0 36 30"><path d="M0 5h10l2-4h12l2 4h10v24H0z" fill="#388fd0" /><circle cx="19" cy="16" r="8" fill="none" stroke="#dcecf8" stroke-width="2" /><path d="M3 8h4v5H3z" fill="#fff" /></svg></button>
            <button class="ml-[22px]" aria-label="打印"><svg class="w-[38px] h-11" viewBox="0 0 38 44"><rect x="1" y="12" width="36" height="22" rx="4" fill="#c1d6ec" stroke="#388fd0" stroke-width="2" /><path d="M7 1h24v11H7zM7 25h24v18H7z" fill="#fff" stroke="#388fd0" stroke-width="2" /><path d="M26 16h4v3h-4z" fill="#388fd0" /></svg></button>
          </div>
          <div class="flex-1 min-h-0 bg-white">
            <svg id="chart" viewBox="1013 323 1538 774" class="block w-full h-full text-[17px] font-['DejaVu_Sans','Noto_Sans_CJK_SC',sans-serif]"></svg>
          </div>
          <svg class="absolute right-[10px] top-[116px] size-[26px]"><use href="#logo" /></svg>
          <!-- highlight around the plot -->
          <div class="absolute -left-[14px] -right-1 top-[108px] -bottom-1 border-[5px] border-[#ff1f12] rounded pointer-events-none"></div>
        </section>

        <!-- Messages -->
        <section class="flex flex-col h-[225px] shrink-0 border-2 border-[#d5d6d9]">
          <div class="flex items-end h-[45px] shrink-0 text-[20px] border-b-2 border-[#d5d6d9]">
            <button class="flex items-center w-[86px] h-[37px] -mb-[2px] ml-[6px] pl-[6px] pt-[2px] text-[#2a5aa0] border-2 border-b-0 border-[#d5d6d9] bg-[#fafbff]">消息<svg class="size-[14px] ml-[13px]" viewBox="0 0 12 12"><path d="m1 1 10 10M11 1 1 11" stroke="#c9cdd4" stroke-width="1.500" /></svg></button>
            <button class="w-[52px] h-9 ml-3 pt-[2px] bg-[#ececee]">进度</button>
            <button class="w-[52px] h-9 ml-3 pt-[2px] bg-[#ececee]">日志</button>
            <button class="flex items-center w-[83px] h-9 ml-3 pl-[6px] pt-[2px] bg-[#ececee]">表格<svg class="size-[14px] ml-[13px]" viewBox="0 0 12 12"><path d="m1 1 10 10M11 1 1 11" stroke="#c9cdd4" stroke-width="1.500" /></svg></button>
            <div class="flex items-center ml-auto mb-[6px] text-[#4a4b4d]">
              <button class="mr-[11px]" aria-label="菜单"><svg class="w-3 h-[7px]"><use href="#caret" /></svg></button>
              <button class="mr-1" aria-label="固定"><svg class="w-3 h-4"><use href="#pin" /></svg></button>
            </div>
          </div>
          <div class="flex items-center gap-[10px] h-[43px] shrink-0 pt-[6px] pl-4">
            <button aria-label="清除"><svg class="w-[17px] h-6" viewBox="0 0 17 24"><path d="m2 1 4 11" stroke="#8a8a8a" stroke-width="2" /><path d="m3 12 5-1 8 9-7 4z" fill="#f9c47e" /><path d="m3 12 5-1 1 2-5 2z" fill="#f0a445" /></svg></button>
            <button aria-label="消息弹出" class="grid place-items-center size-[27px] rounded border-2 border-[#2196f3] bg-[#9dd0f8]"><svg class="w-[22px] h-5" viewBox="0 0 22 20"><path d="M1 1h17v14H1z" fill="#fff" stroke="#4a83c3" /><path d="M1 1h17v3H1z" fill="#bcdcf5" stroke="#4a83c3" /><path d="M8 8h13v11H8zM8 8l6 6 7-6M8 19l4-6M21 19l-4-6" fill="#fff" stroke="#388fd0" /></svg></button>
          </div>
          <div class="flex flex-1 min-h-0 ml-[6px] mr-1 mb-[5px] border-2 border-[#d5d6d9]">
            <div class="flex-1 flex flex-col justify-end min-w-0 pl-1 pb-[10px] overflow-hidden">
              <p>[2023年2月15日 下午4:25] 打开的文件：D:\download data\tonpilz_transducer.zh_CN.mph</p>
              <p>[2023年2月15日 下午4:26] 导出的绘图数据：C:\Users\mario\Desktop\返校后模型\Untitled.csv (1 KB)</p>
              <p>[2023年2月15日 下午4:27] 导出的绘图数据：C:\Users\mario\Desktop\返校后模型\Untitled.csv (1 KB)</p>
              <p>[2023年2月15日 下午4:27] 导出的绘图数据：C:\Users\mario\Desktop\返校后模型\Untitled.csv (899 B)</p>
              <p>[2023年2月15日 下午5:20] 导出的绘图数据：C:\Users\mario\Desktop\返校后模型\Untitled.csv (1 KB)</p>
            </div>
            <div class="flex flex-col w-[26px] shrink-0 bg-[#fdfdff]">
              <div class="grid place-items-center h-[26px] bg-[#f4f5f7]"><svg class="w-3 h-2" viewBox="0 0 12 8"><path d="m1 7 5-5 5 5" fill="none" stroke="#c9cacd" stroke-width="1.500" /></svg></div>
              <div class="h-[54px] mt-[13px] bg-[#e4e5e7]"></div>
              <div class="grid place-items-center h-[26px] mt-auto bg-[#f4f5f7]"><svg class="w-3 h-2" viewBox="0 0 12 8"><path d="m1 1 5 5 5-5" fill="none" stroke="#c9cacd" stroke-width="1.500" /></svg></div>
            </div>
          </div>
        </section>
      </div>
    </main>

    <footer class="flex items-center h-[45px] shrink-0 pt-[14px] pl-[1539px]">
      <span>642 MB | 1524 MB</span>
      <span class="ml-auto mr-4 pb-[6px] text-[#8e8f92]">CSDN @奇妙水果</span>
    </footer>

    <script>
      // [depth, state, icon, label, tag]
      const nodes = [
        [0, "open", "root", "tonpilz_transducer.zh_CN.mph", "(root)"],
        [1, "open", "globe", "全局定义"],
        [2, "", "param", "参数 1"],
        [2, "", "input", "默认模型输入"],
        [2, "", "material", "材料"],
        [1, "closed", "comp", "组件 1", "(comp1)"],
        [1, "closed", "study", "研究 1"],
        [1, "open", "results", "结果"],
        [2, "closed", "dataset", "数据集"],
        [2, "closed", "view", "视图"],
        [2, "", "derived", "派生值"],
        [2, "", "table", "表格"],
        [2, "closed", "cube", "声压 (acpr)"],
        [2, "closed", "cubestar", "声压级 (acpr)"],
        [2, "closed", "cubestar", "声压，等值面 (acpr)"],
        [2, "open", "cube", "外场声压级 (acpr)"],
        [3, "", "radiation", "辐射方向图 1"],
        [2, "closed", "square", "外场压力 (acpr)"],
        [2, "closed", "polar", "相对波束灵敏度极坐标图"],
        [2, "closed", "cubestar", "位移"],
        [2, "closed", "cubestar", "电势 (es)"],
        [2, "closed", "cubestar", "电场模 (es)"],
        [2, "closed", "curve", "轴上压力"],
        [2, "closed", "curve", "比声阻抗"],
        [2, "open", "curve", "发射电压响应"],
        [3, "", "global", "全局 1"],
        [2, "closed", "curve", "指向性指数 (DI)"],
        [2, "closed", "curve", "总辐射功率"],
        [2, "closed", "cubestar", "外部压力切面"],
        [2, "closed", "cubestar", "外部声压级切面"],
        [2, "open", "export", "导出"],
        [3, "", "plotout", "绘图 1"],
        [2, "", "report", "报告"],
      ];
      const indents = ["pl-2", "pl-[38px]", "pl-[68px]", "pl-[98px]"];
      const arrows = {
        open: '<path d="M10 0v10H0z" fill="#444"/>',
        closed: '<path d="M2 -1v12l7-6z" fill="#fff" stroke="#8a8a8a" stroke-width="1.3"/>',
        "": "",
      };

      document.getElementById("tree").innerHTML = nodes
        .map(
          ([depth, state, icon, label, tag]) => `
        <li class="flex items-center h-[27px] whitespace-nowrap ${indents[depth]} ${label === "发射电压响应" ? "bg-[#c0e1fc]" : ""}">
          <svg class="size-[10px] mr-3 overflow-visible" viewBox="0 0 10 10">${arrows[state]}</svg>
          <svg class="w-6 h-[22px] mr-2"><use href="#${icon}"/></svg>
          ${label}${tag ? `<i class="ml-[9px]">${tag}</i>` : ""}
        </li>`
        )
        .join("");

      // Transmitting voltage response, 1 to 40 kHz in 1 kHz steps
      const tvr = [
        79, 91.4, 99.3, 105.1, 110.6, 116, 121.4, 125.7, 125.8, 124.1, 122.8,
        121.9, 121.3, 121, 120.8, 120.7, 120.65, 120.7, 120.75, 120.8, 120.8,
        120.7, 120.6, 120.4, 120.1, 119.9, 119.9, 120.5, 121.9, 123.9, 126,
        127.9, 129.4, 130.5, 131.3, 131.75, 131.95, 132, 131.95, 131.75,
      ];
      const left = 1116, right = 2543, top_ = 388, bottom = 1042;
      const px = (f) => Math.round(1276 + ((f - 5) * 1250) / 35);
      const py = (v) => Math.round(1014 - ((v - 80) * 2932) / 250);
      let grid = "";
      let labels = "";
      for (let f = 5; f <= 40; f += 5) {
        const x = px(f);
        grid += `<path d="M${x} ${top_}V${bottom}" stroke="#ededed" stroke-width="2"/><path d="M${x} ${top_}v9M${x} ${bottom}v-9" stroke="#7a7a7a" stroke-width="2"/>`;
        labels += `<text x="${x}" y="1067" text-anchor="middle">${f}</text>`;
      }
      for (let v = 80; v <= 130; v += 5) {
        const y = py(v);
        grid += `<path d="M${left} ${y}H${right}" stroke="#ededed" stroke-width="2"/><path d="M${left} ${y}h9M${right} ${y}h-9" stroke="#7a7a7a" stroke-width="2"/>`;
        labels += `<text x="1109" y="${y + 6}" text-anchor="end">${v}</text>`;
      }
      const points = tvr
        .map((v, i) => `${1276 + ((i - 4) * 1250) / 35},${1014 - ((v - 80) * 2932) / 250}`)
        .join(" ");
      document.getElementById("chart").innerHTML = `
        ${grid}
        <rect x="${left}" y="${top_}" width="${right - left}" height="${bottom - top_}" fill="none" stroke="#7a7a7a" stroke-width="2"/>
        <polyline points="${points}" fill="none" stroke="#2f55f5" stroke-width="1.3"/>
        ${labels}
        <text x="1829" y="1087" text-anchor="middle">freq (kHz)</text>
        <text x="1827" y="356" text-anchor="middle" fill="#333">发射电压响应</text>
        <text transform="translate(1030 709) rotate(-90)" text-anchor="middle">TVR（dB 相对 1μPa/V）</text>`;
    </script>
  </body>
</html>
